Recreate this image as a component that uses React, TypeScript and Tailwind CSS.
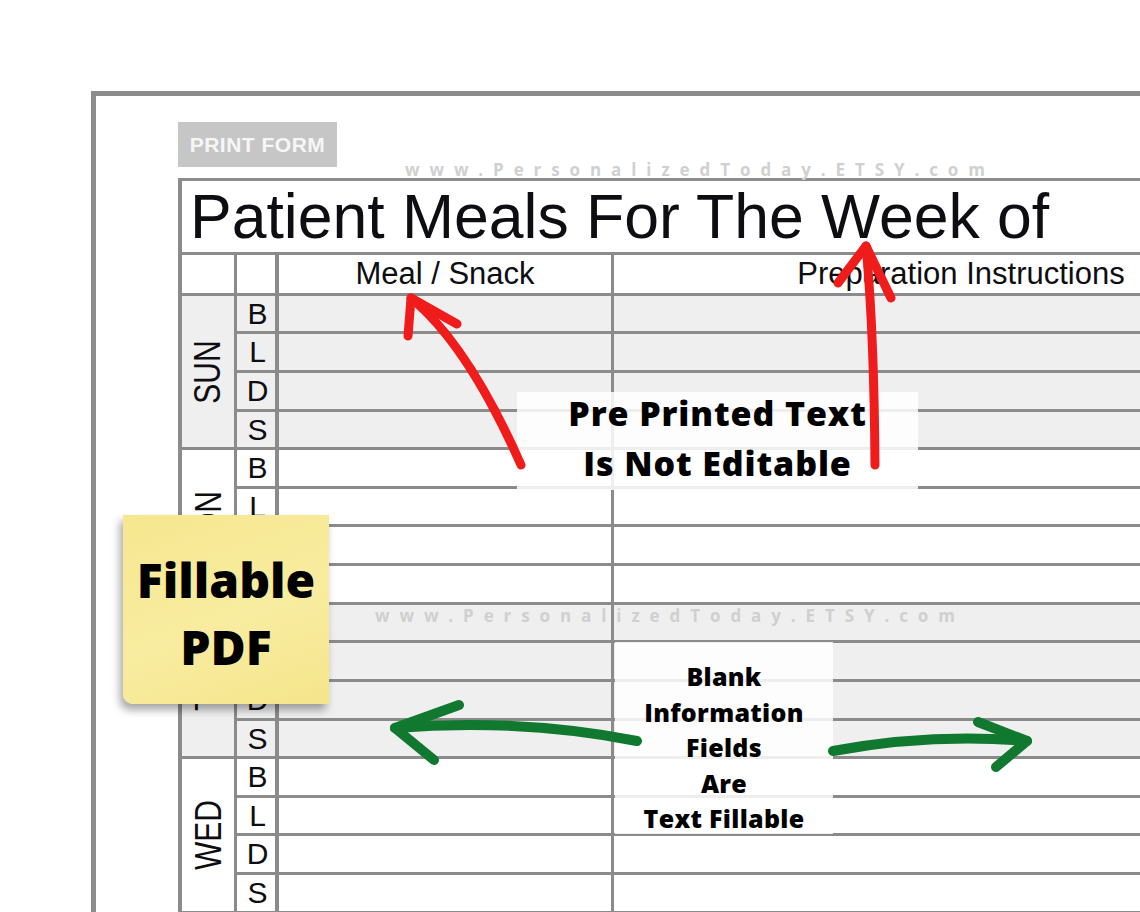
const days = [
  { name: 'SUN', shaded: true, rows: ['h-[38px]', 'h-[39px]', 'h-[39px]', 'h-[38px]'] },
  { name: 'MON', shaded: false, rows: ['h-[39px]', 'h-[38px]', 'h-[39px]', 'h-[39px]'] },
  { name: 'TUE', shaded: true, rows: ['h-[38px]', 'h-[39px]', 'h-[39px]', 'h-[38px]'] },
  { name: 'WED', shaded: false, rows: ['h-[39px]', 'h-[38px]', 'h-[39px]', 'h-[39px]'] },
];

const meals = ['B', 'L', 'D', 'S'];

function Watermark({ className }: { className: string }) {
  return (
    <div
      className={`absolute whitespace-nowrap font-['Open_Sans',sans-serif] text-[17px] font-bold leading-none tracking-[9.9px] text-[#d0d0d0] ${className}`}
    >
      www.PersonalizedToday.ETSY.com
    </div>
  );
}

function DayBlock({ name, shaded, rows }: { name: string; shaded: boolean; rows: string[] }) {
  return (
    <div className={`flex ${shaded ? 'bg-[#efefef]' : 'bg-white'}`}>
      <div className="flex w-[55px] items-center justify-center border-b-[3px] border-r-[3px] border-[#8b8b8b]">
        <span className="-rotate-90 scale-y-[1.25] whitespace-nowrap text-[30px] leading-none">{name}</span>
      </div>
      <div className="flex flex-col">
        {rows.map((h, i) => (
          <div key={i} className={`flex border-b-[3px] border-[#8b8b8b] ${h}`}>
            <div className="flex w-[42px] items-center justify-center border-r-4 border-[#8b8b8b] pl-[3px] text-[30px] leading-none">
              {meals[i]}
            </div>
            <div className="w-[335px] border-r-[3px] border-[#8b8b8b]" />
            <div className="w-[694px]" />
          </div>
        ))}
      </div>
    </div>
  );
}

export default function App() {
  return (
    <div className="relative h-[912px] w-[1140px] overflow-hidden bg-white font-['Liberation_Sans',Arial,sans-serif] text-[#0d0d12]">
      {/* paper */}
      <div className="ml-[91px] mt-[91px] h-[900px] w-[1250px] border-l-[5px] border-t-[5px] border-[#8c8c8c] pl-[82px] pt-[26px]">
        <div className="flex h-[45px] w-[159px] items-center justify-center bg-[#c6c6c6] text-[21px] font-bold tracking-[0.5px] text-[#f6f6f6]">
          PRINT FORM
        </div>

        <div className="mt-[11px] w-[1130px] border-l-4 border-t-[3px] border-[#8b8b8b]">
          <div className="h-[74px] whitespace-nowrap border-b-[3px] border-[#8b8b8b] pl-[8px] pt-[4px] text-[62.5px] leading-[62px]">
            Patient Meals For The Week of
          </div>
          <div className="flex h-[41px] border-b-[3px] border-[#8b8b8b] text-[31px] leading-[38px]">
            <div className="w-[55px] border-r-[3px] border-[#8b8b8b]" />
            <div className="w-[42px] border-r-4 border-[#8b8b8b]" />
            <div className="w-[335px] border-r-[3px] border-[#8b8b8b] text-center">Meal / Snack</div>
            <div className="w-[694px] text-center">Preparation Instructions</div>
          </div>
          {days.map((d) => (
            <DayBlock key={d.name} {...d} />
          ))}
        </div>
      </div>

      <Watermark className="left-[405px] top-[161px]" />
      <Watermark className="left-[375px] top-[607px]" />

      {/* sticky note */}
      <div className="absolute left-[123px] top-[515px] flex h-[189px] w-[206px] flex-col items-center rounded-bl-[10px] bg-[linear-gradient(160deg,#f6e78f,#f8eca0_55%,#f5e58b)] pt-[31px] font-['Open_Sans',sans-serif] text-[48px] font-extrabold leading-[67px] text-black shadow-[-3px_6px_8px_rgba(0,0,0,0.35)]">
        <span>Fillable</span>
        <span>PDF</span>
      </div>

      {/* callouts */}
      <div className="absolute left-[517px] top-[392px] flex h-[98px] w-[401px] flex-col items-center bg-white/85 font-['Open_Sans',sans-serif] text-[34px] font-extrabold leading-[50px] tracking-[0.9px] text-black">
        <span className="-mt-[4px]">Pre Printed Text</span>
        <span>Is Not Editable</span>
      </div>

      <div className="absolute left-[615px] top-[642px] flex h-[192px] w-[218px] flex-col items-center bg-white/85 pt-[17px] font-['Open_Sans',sans-serif] text-[25px] font-extrabold leading-[35.5px] tracking-[0.3px] text-black">
        <span>Blank</span>
        <span>Information</span>
        <span>Fields</span>
        <span>Are</span>
        <span className="whitespace-nowrap">Text Fillable</span>
      </div>

      {/* hand drawn arrows */}
      <svg className="pointer-events-none absolute left-0 top-0" width="1140" height="912" fill="none" strokeLinecap="round" strokeLinejoin="round">
        <g stroke="#f01b1b" strokeWidth="9">
          <path d="M521 465 Q 468 345 411 298" />
          <path d="M408 336 L411 298 L457 324" />
          <path d="M875 465 Q 874 330 866 246" />
          <path d="M838 283 L866 246 L891 298" />
        </g>
        <g stroke="#11782f" strokeWidth="10">
          <path d="M637 741 Q 520 718 395 728" />
          <path d="M459 705 L395 728 L434 760" />
          <path d="M833 751 Q 930 733 1027 741" />
          <path d="M978 722 L1027 741 L996 767" />
        </g>
      </svg>
    </div>
  );
}
